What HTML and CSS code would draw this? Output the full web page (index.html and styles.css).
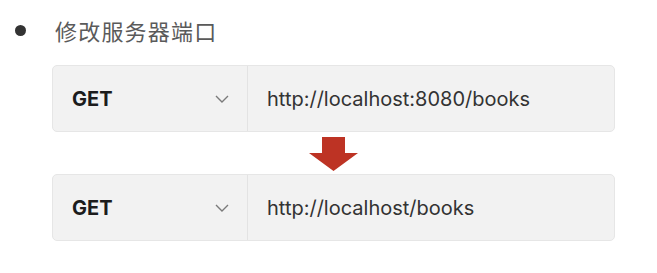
FILE: index.html
```html
<!DOCTYPE html>
<html lang="zh-CN">

<head>
  <meta charset="UTF-8">
  <title>修改服务器端口</title>
  <link rel="stylesheet" href="styles.css">
</head>

<body>

  <div class="item">
    <span class="dot"></span>
    <span class="title">修改服务器端口</span>
  </div>

  <div class="requests">
    <div class="request">
      <div class="method">
        <span>GET</span>
        <svg class="chevron" width="14" height="8" viewBox="0 0 14 8">
          <polyline points="1,1 7,7 13,1" fill="none" stroke="#7a7a7a" stroke-width="1.4" />
        </svg>
      </div>
      <div class="url">http://localhost:8080/books</div>
    </div>

    <svg class="arrow" width="49" height="34" viewBox="0 0 49 34">
      <polygon points="13,0 36,0 36,16 49,16 24.5,34 0,16 13,16" fill="#bd3324" />
    </svg>

    <div class="request">
      <div class="method">
        <span>GET</span>
        <svg class="chevron" width="14" height="8" viewBox="0 0 14 8">
          <polyline points="1,1 7,7 13,1" fill="none" stroke="#7a7a7a" stroke-width="1.4" />
        </svg>
      </div>
      <div class="url">http://localhost/books</div>
    </div>
  </div>

</body>

</html>
```

FILE: styles.css
```css
body {
  margin: 0;
  background: #fff;
  font-family: Inter, "Noto Sans CJK SC", sans-serif;
}

.item {
  display: flex;
  align-items: center;
  height: 30px;
  padding: 15px 0 0 15px;
}

.dot {
  width: 11px;
  height: 11px;
  border-radius: 50%;
  background: #333;
  margin-right: 29px;
}

.title {
  font-family: "Noto Sans CJK SC", sans-serif;
  font-size: 22px;
  color: #5a5a5a;
  letter-spacing: 1.2px;
}

.requests {
  display: flex;
  flex-direction: column;
  align-items: center;
  width: 563px;
  margin: 20px 0 0 52px;
}

.request {
  display: flex;
  width: 100%;
  height: 67px;
  box-sizing: border-box;
  background: #f2f2f2;
  border: 1px solid #e6e6e6;
  border-radius: 5px;
}

.method {
  display: flex;
  align-items: center;
  justify-content: space-between;
  width: 195px;
  box-sizing: border-box;
  padding: 0 18px 0 19px;
  border-right: 1px solid #e3e3e3;
  font-size: 20px;
  font-weight: 700;
  color: #1c1c1c;
}

.url {
  display: flex;
  align-items: center;
  padding-left: 19px;
  font-size: 20px;
  color: #333;
}

.arrow {
  margin: 5px 0 3px;
}
```
